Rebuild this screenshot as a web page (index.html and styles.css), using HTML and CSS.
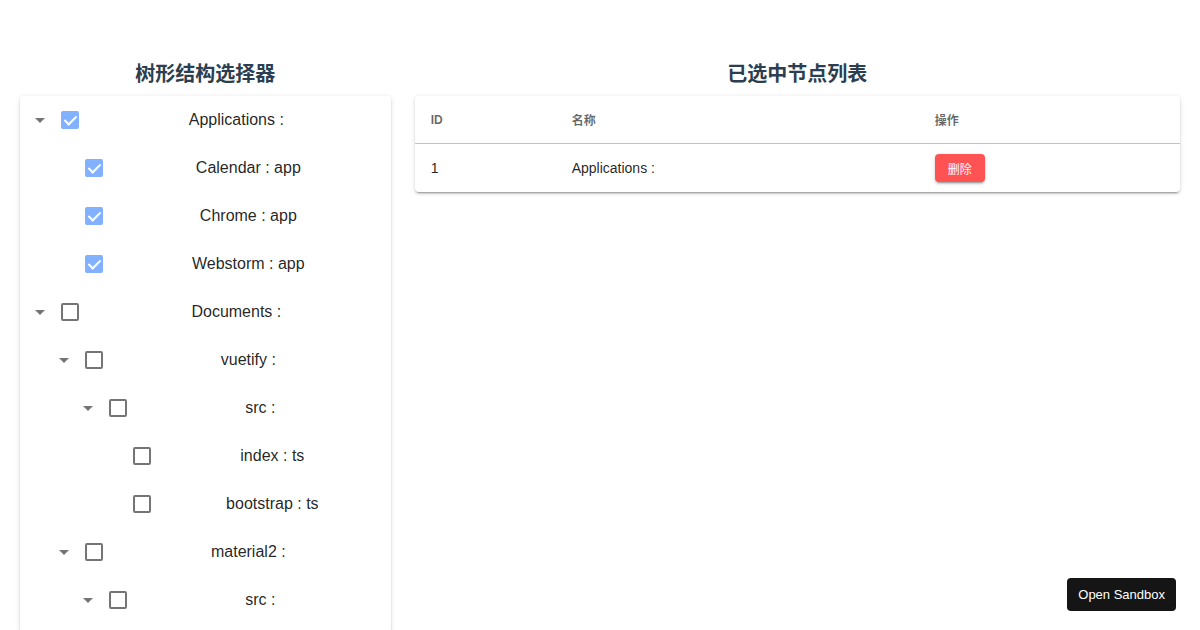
FILE: index.html
```html
<!DOCTYPE html>
<html lang="zh">
<head>
    <meta charset="UTF-8">
    <meta name="viewport" content="width=device-width, initial-scale=1.0">
    <title>Tree Select</title>
    <link rel="stylesheet" href="styles.css">
</head>
<body>
    <div class="page">
        <div class="col col-left">
            <h3 class="title">树形结构选择器</h3>
            <div class="card tree">
                <div class="node"><span class="toggle"></span><span class="box checked"></span><span class="label">Applications :</span></div>
                <div class="node lv1"><span class="toggle none"></span><span class="box checked"></span><span class="label">Calendar : app</span></div>
                <div class="node lv1"><span class="toggle none"></span><span class="box checked"></span><span class="label">Chrome : app</span></div>
                <div class="node lv1"><span class="toggle none"></span><span class="box checked"></span><span class="label">Webstorm : app</span></div>
                <div class="node"><span class="toggle"></span><span class="box"></span><span class="label">Documents :</span></div>
                <div class="node lv1"><span class="toggle"></span><span class="box"></span><span class="label">vuetify :</span></div>
                <div class="node lv2"><span class="toggle"></span><span class="box"></span><span class="label">src :</span></div>
                <div class="node lv3"><span class="toggle none"></span><span class="box"></span><span class="label">index : ts</span></div>
                <div class="node lv3"><span class="toggle none"></span><span class="box"></span><span class="label">bootstrap : ts</span></div>
                <div class="node lv1"><span class="toggle"></span><span class="box"></span><span class="label">material2 :</span></div>
                <div class="node lv2"><span class="toggle"></span><span class="box"></span><span class="label">src :</span></div>
            </div>
        </div>
        <div class="col col-right">
            <h3 class="title">已选中节点列表</h3>
            <div class="card">
                <table class="list">
                    <thead>
                        <tr>
                            <th class="c-id">ID</th>
                            <th class="c-name">名称</th>
                            <th>操作</th>
                        </tr>
                    </thead>
                    <tbody>
                        <tr>
                            <td>1</td>
                            <td>Applications :</td>
                            <td><button class="btn-del">删除</button></td>
                        </tr>
                    </tbody>
                </table>
            </div>
        </div>
    </div>
    <button class="sandbox">Open Sandbox</button>
</body>
</html>
```

FILE: styles.css
```css
body {
    margin: 0;
    font-family: "Liberation Sans", "Noto Sans CJK SC", sans-serif;
    color: rgba(0,0,0,0.87);
    background: #fff;
}
.page {
    display: flex;
    padding: 62px 8px 0;
}
.col {
    padding: 0 12px;
    box-sizing: border-box;
}
.col-left {
    width: 33.3333%;
}
.col-right {
    width: 66.6667%;
}
.title {
    margin: 0 0 10px;
    font-size: 20px;
    line-height: 24px;
    font-weight: bold;
    text-align: center;
    color: #2c3e50;
}
.card {
    background: #fff;
    border-radius: 4px;
    box-shadow: 0 3px 1px -2px rgba(0,0,0,.2), 0 2px 2px 0 rgba(0,0,0,.14), 0 1px 5px 0 rgba(0,0,0,.12);
}
.tree {
    padding-bottom: 8px;
}
.node {
    display: flex;
    align-items: center;
    height: 48px;
    padding-left: 8px;
}
.node.lv1 { padding-left: 32px; }
.node.lv2 { padding-left: 56px; }
.node.lv3 { padding-left: 80px; }
.toggle {
    width: 24px;
    height: 24px;
    position: relative;
    flex: none;
}
.toggle::after {
    content: "";
    position: absolute;
    left: 7px;
    top: 10px;
    border-left: 5px solid transparent;
    border-right: 5px solid transparent;
    border-top: 5px solid #757575;
}
.toggle.none::after {
    display: none;
}
.box {
    flex: none;
    width: 18px;
    height: 18px;
    margin-left: 9px;
    margin-right: 3px;
    box-sizing: border-box;
    border: 2px solid #757575;
    border-radius: 2px;
    position: relative;
}
.box.checked {
    background: #82b1ff;
    border-color: #82b1ff;
}
.box.checked::after {
    content: "";
    position: absolute;
    left: 4px;
    top: 0;
    width: 5px;
    height: 10px;
    border: solid #fff;
    border-width: 0 2px 2px 0;
    transform: rotate(45deg);
}
.label {
    flex: 1;
    text-align: center;
    font-size: 16px;
    line-height: 20px;
    color: rgba(0,0,0,0.87);
}
.list {
    width: 100%;
    border-collapse: collapse;
    font-size: 14px;
}
.list th {
    height: 47px;
    padding: 0 16px;
    text-align: left;
    font-size: 12px;
    font-weight: bold;
    color: rgba(0,0,0,0.6);
    border-bottom: 1px solid rgba(0,0,0,0.12);
}
.list td {
    height: 48px;
    padding: 0 16px;
    text-align: left;
}
.c-id {
    width: 109px;
}
.c-name {
    width: 331px;
}
.btn-del {
    height: 28px;
    padding: 0 13px;
    border: none;
    border-radius: 4px;
    background: #ff5252;
    color: #fff;
    font-family: "Liberation Sans", "Noto Sans CJK SC", sans-serif;
    font-size: 12px;
    box-shadow: 0 3px 1px -2px rgba(0,0,0,.2), 0 2px 2px 0 rgba(0,0,0,.14), 0 1px 5px 0 rgba(0,0,0,.12);
    cursor: pointer;
}
.sandbox {
    position: fixed;
    right: 24px;
    bottom: 19px;
    height: 33px;
    padding: 0 11px;
    border: none;
    border-radius: 4px;
    background: #151515;
    color: #fff;
    font-family: "Liberation Sans", sans-serif;
    font-size: 13px;
}
```
